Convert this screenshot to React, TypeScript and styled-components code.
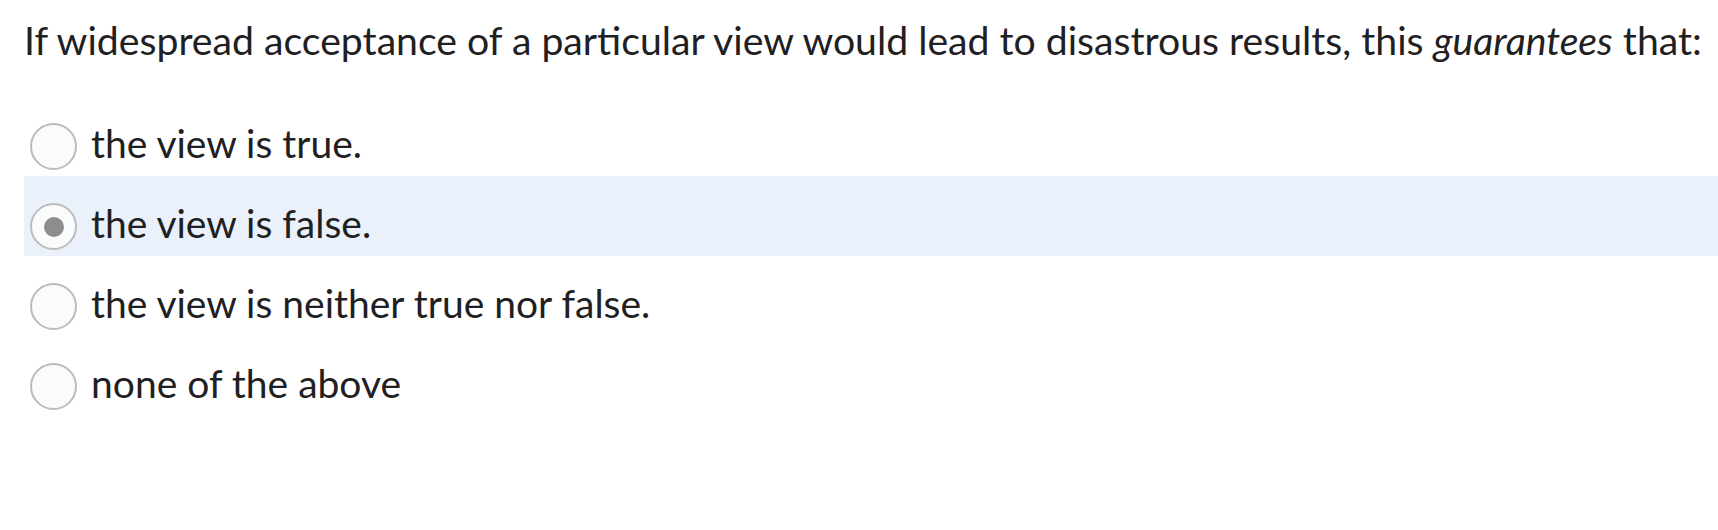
import * as React from "react";
import styled, { createGlobalStyle } from "styled-components";

const GlobalStyle = createGlobalStyle`
  html, body {
    margin: 0;
    padding: 0;
    background: #ffffff;
  }
  body {
    font-family: Lato, "Noto Sans", sans-serif;
    color: #1f2022;
  }
`;

const Page = styled.div`
  padding: 16px 0 0 24px;
`;
const Question = styled.div`
  font-size: 39.2px;
  line-height: 47px;
  margin-bottom: 33px;
  white-space: nowrap;
`;
const Options = styled.div`
  display: flex;
  flex-direction: column;
`;
const Row = styled.label<{ $selected?: boolean }>`
  box-sizing: border-box;
  display: flex;
  align-items: flex-start;
  height: 80px;
  padding: 24px 0 0 6px;
  gap: 14px;
  background: ${(p) => (p.$selected ? "#eaf1fb" : "transparent")};
  cursor: pointer;
`;
const Radio = styled.span<{ $checked?: boolean }>`
  box-sizing: border-box;
  width: 47px;
  height: 47px;
  margin-top: 3px;
  border-radius: 50%;
  border: 2px solid #bcbcbc;
  background: #fafbfd;
  display: flex;
  align-items: center;
  justify-content: center;
  flex-shrink: 0;
  &::after {
    content: "";
    display: ${(p) => (p.$checked ? "block" : "none")};
    width: 20px;
    height: 20px;
    border-radius: 50%;
    background: #8c8d8f;
  }
`;
const OptionText = styled.span`
  font-size: 39px;
  line-height: 47px;
`;

const options = [
  "the view is true.",
  "the view is false.",
  "the view is neither true nor false.",
  "none of the above",
];

export default function App() {
  const [selected, setSelected] = React.useState(1);
  return (
    <Page>
      <GlobalStyle />
      <Question>
        If widespread acceptance of a particular view would lead to disastrous
        results, this <em>guarantees</em> that:
      </Question>
      <Options>
        {options.map((text, i) => (
          <Row key={i} $selected={i === selected} onClick={() => setSelected(i)}>
            <Radio $checked={i === selected} />
            <OptionText>{text}</OptionText>
          </Row>
        ))}
      </Options>
    </Page>
  );
}
